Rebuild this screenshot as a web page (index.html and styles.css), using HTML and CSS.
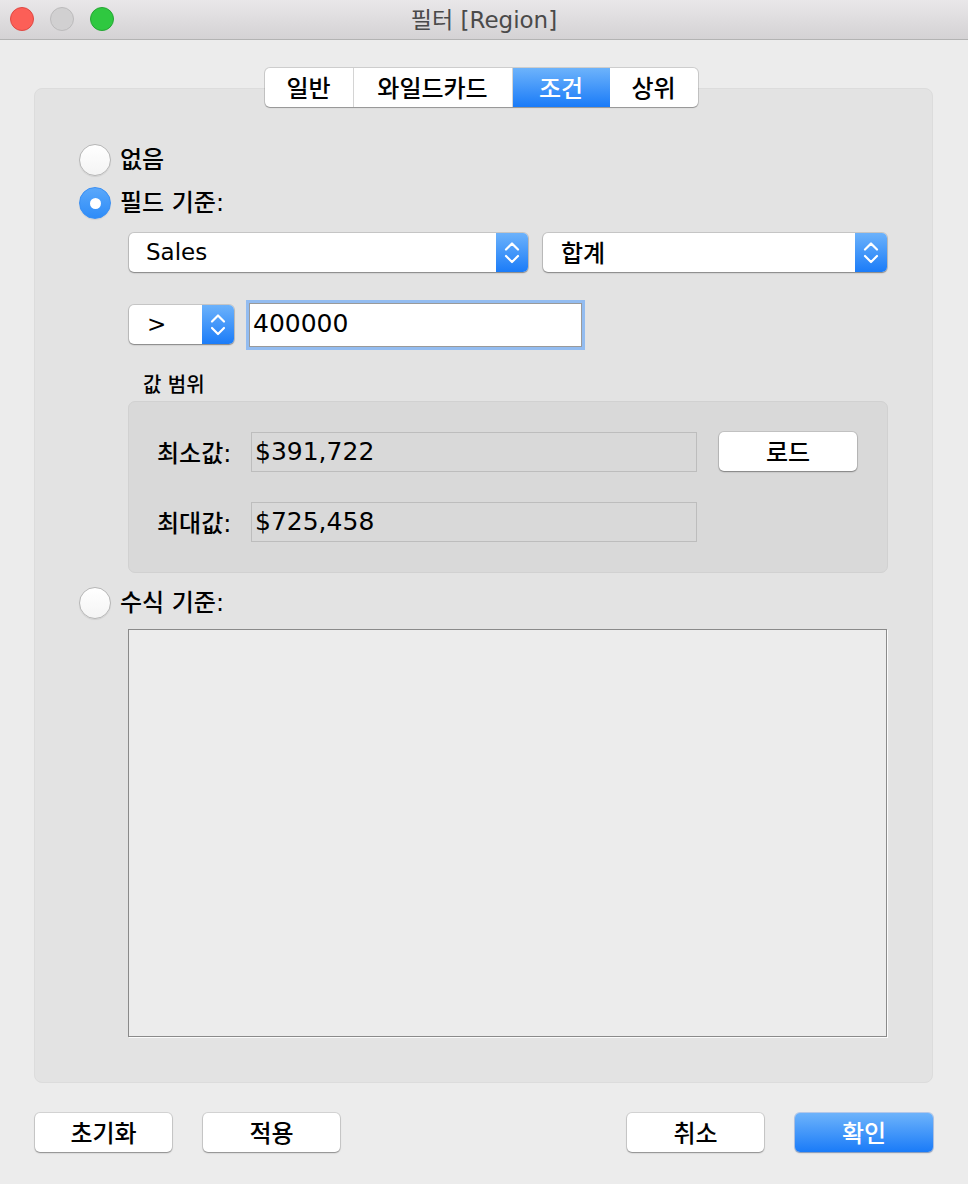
FILE: index.html
```html
<!DOCTYPE html>
<html lang="ko">
<head>
<meta charset="utf-8">
<title>필터 [Region]</title>
<link rel="stylesheet" href="styles.css">
</head>
<body>
<div class="window">
  <div class="titlebar">
    <div class="lights">
      <span class="light red"></span>
      <span class="light grey"></span>
      <span class="light green"></span>
    </div>
    <div class="title">필터 [Region]</div>
    <div></div>
  </div>

  <div class="content">
    <div class="tabs">
      <div class="tab t1">일반</div>
      <div class="tab t2">와일드카드</div>
      <div class="tab t3 active">조건</div>
      <div class="tab t4">상위</div>
    </div>

    <div class="panel">
      <div class="radio-row">
        <span class="radio"></span>
        <span class="radio-label">없음</span>
      </div>
      <div class="radio-row r2">
        <span class="radio checked"></span>
        <span class="radio-label">필드 기준:</span>
      </div>

      <div class="field-block">
        <div class="select-row">
          <div class="select sel-field">
            <span class="sel-text latin">Sales</span>
            <span class="sel-arrow"><svg width="32" height="39" viewBox="0 0 32 39"><path d="M10 16.5 L16 10.5 L22 16.5 M10 23 L16 29 L22 23" fill="none" stroke="#fff" stroke-width="2.2" stroke-linecap="round" stroke-linejoin="round"/></svg></span>
          </div>
          <div class="select sel-agg">
            <span class="sel-text">합계</span>
            <span class="sel-arrow"><svg width="32" height="39" viewBox="0 0 32 39"><path d="M10 16.5 L16 10.5 L22 16.5 M10 23 L16 29 L22 23" fill="none" stroke="#fff" stroke-width="2.2" stroke-linecap="round" stroke-linejoin="round"/></svg></span>
          </div>
        </div>

        <div class="op-row">
          <div class="select sel-op">
            <span class="sel-text latin">&gt;</span>
            <span class="sel-arrow"><svg width="32" height="39" viewBox="0 0 32 39"><path d="M10 16.5 L16 10.5 L22 16.5 M10 23 L16 29 L22 23" fill="none" stroke="#fff" stroke-width="2.2" stroke-linecap="round" stroke-linejoin="round"/></svg></span>
          </div>
          <div class="value-input">400000</div>
        </div>

        <div class="range-label">값 범위</div>
        <div class="range-box">
          <div class="range-row">
            <span class="range-name">최소값:</span>
            <span class="range-field">$391,722</span>
            <span class="btn load">로드</span>
          </div>
          <div class="range-row r-second">
            <span class="range-name">최대값:</span>
            <span class="range-field">$725,458</span>
          </div>
        </div>
      </div>

      <div class="radio-row r3">
        <span class="radio"></span>
        <span class="radio-label">수식 기준:</span>
      </div>
      <div class="formula"></div>
    </div>

    <div class="footer">
      <div class="btn foot">초기화</div>
      <div class="btn foot">적용</div>
      <div class="spacer"></div>
      <div class="btn foot">취소</div>
      <div class="btn foot primary">확인</div>
    </div>
  </div>
</div>
</body>
</html>
```

FILE: styles.css
```css
* { box-sizing: border-box; }

html, body {
  margin: 0;
  padding: 0;
}

body {
  background: #ececec;
  font-family: "DejaVu Sans", "Noto Sans CJK KR", sans-serif;
  font-size: 24px;
  font-weight: 500;
  color: #000;
}

.window {
  width: 968px;
  height: 1184px;
  display: flex;
  flex-direction: column;
  overflow: hidden;
}

/* Title bar */
.titlebar {
  height: 40px;
  flex: none;
  display: grid;
  grid-template-columns: 1fr auto 1fr;
  align-items: center;
  background: linear-gradient(#e9e7e9, #d4d2d4);
  border-bottom: 1px solid #b3b3b3;
}

.lights {
  display: flex;
  gap: 16px;
  padding-left: 10px;
  padding-bottom: 1px;
}

.light {
  width: 24px;
  height: 24px;
  border-radius: 50%;
  display: block;
}

.light.red { background: #fc5f57; border: 1px solid #df4843; }
.light.grey { background: #d1d0d1; border: 1px solid #bcbbbc; }
.light.green { background: #2fc840; border: 1px solid #25a634; }

.title {
  color: #4a4a4a;
  font-size: 23px;
  font-weight: 400;
  line-height: 26px;
  padding-top: 1px;
}

/* Content */
.content {
  flex: 1;
  display: flex;
  flex-direction: column;
  padding: 28px 35px 0 34px;
}

.tabs {
  align-self: center;
  display: flex;
  height: 39px;
  margin-bottom: -19px;
  margin-left: -5px;
  position: relative;
  z-index: 1;
  background: #fff;
  border-radius: 5px;
  box-shadow: 0 0 0 1px rgba(0,0,0,0.13), 0 1px 1px rgba(0,0,0,0.25);
  overflow: hidden;
}

.tab {
  display: flex;
  align-items: center;
  justify-content: center;
  font-size: 24px;
  border-right: 1px solid #d4d4d4;
  padding-bottom: 2px;
}

.tab:last-child { border-right: none; }
.tab.t1 { width: 89px; }
.tab.t2 { width: 159px; }
.tab.t3 { width: 97px; }
.tab.t4 { width: 88px; }

.tab.active {
  background: linear-gradient(#6db3fb, #1a7bf8);
  color: #fff;
  border-right: none;
}

.panel {
  height: 995px;
  background: #e3e3e3;
  border: 1px solid #dcdcdc;
  border-radius: 8px;
  padding: 55px 0 0 44px;
  display: flex;
  flex-direction: column;
}

/* Radios */
.radio-row {
  display: flex;
  align-items: center;
  height: 32px;
  gap: 9px;
}

.radio-row.r2 { margin-top: 11px; }
.radio-row.r3 { margin-top: 14px; }

.radio {
  width: 32px;
  height: 32px;
  border-radius: 50%;
  background: linear-gradient(#ffffff, #f4f4f4);
  border: 1px solid #b6b6b6;
  box-shadow: 0 1px 1px rgba(0,0,0,0.08);
  display: flex;
  align-items: center;
  justify-content: center;
  flex: none;
}

.radio.checked {
  background: linear-gradient(#5aa8fb, #2e8cf8);
  border: 1px solid #3a8ff3;
}

.radio.checked::after {
  content: "";
  width: 11px;
  height: 11px;
  border-radius: 50%;
  background: #fff;
}

.radio-label {
  font-size: 24px;
  line-height: 32px;
  padding-bottom: 1px;
}

/* Field block */
.field-block {
  margin-left: 50px;
  margin-top: 14px;
  display: flex;
  flex-direction: column;
}

.select-row {
  display: flex;
  gap: 15px;
}

.select {
  height: 39px;
  background: #fff;
  border-radius: 5px;
  box-shadow: 0 0 0 1px rgba(0,0,0,0.12), 0 1px 1.5px rgba(0,0,0,0.35);
  display: flex;
  align-items: center;
  justify-content: space-between;
  overflow: hidden;
}

.sel-field { width: 399px; }
.sel-agg { width: 344px; }
.sel-op { width: 105px; margin-top: 5px; }

.sel-text {
  padding-left: 18px;
  font-size: 24px;
  padding-bottom: 2px;
}

.sel-text.latin {
  font-size: 23px;
  font-weight: 400;
  padding-left: 17px;
}

.sel-op .sel-text.latin { padding-left: 18px; }

.sel-arrow {
  width: 32px;
  height: 100%;
  background: linear-gradient(#6cb2fb, #1b7cf8);
  display: flex;
  align-items: center;
  justify-content: center;
  flex: none;
}

.sel-arrow svg { display: block; }

.op-row {
  display: flex;
  align-items: flex-start;
  margin-top: 28px;
}

.value-input {
  width: 333px;
  height: 44px;
  margin: 3px 0 3px 15px;
  background: #fff;
  border: 1px solid #9a9a9a;
  box-shadow: 0 0 0 3px #93bcf0;
  font-size: 25px;
  font-weight: 400;
  line-height: 40px;
  padding-left: 3px;
}

.range-label {
  margin: 23px 0 0 14px;
  font-size: 20px;
  line-height: 25px;
}

.range-box {
  margin: 3px 0 0 -1px;
  width: 760px;
  height: 172px;
  background: #d9d9d9;
  border: 1px solid #d1d1d1;
  border-radius: 7px;
  padding: 30px 0 0 28px;
  display: flex;
  flex-direction: column;
}

.range-row {
  display: flex;
  align-items: center;
  height: 40px;
}

.range-row.r-second { margin-top: 30px; }

.range-name {
  width: 94px;
  font-size: 24px;
  padding-bottom: 2px;
}

.range-field {
  width: 446px;
  height: 40px;
  border: 1px solid #bdbdbd;
  background: #d9d9d9;
  font-size: 25px;
  font-weight: 400;
  line-height: 38px;
  padding-left: 3px;
}

.btn {
  height: 39px;
  background: #fff;
  border-radius: 5px;
  box-shadow: 0 0 0 1px rgba(0,0,0,0.1), 0 1px 1.5px rgba(0,0,0,0.35);
  display: flex;
  align-items: center;
  justify-content: center;
  font-size: 24px;
  padding-bottom: 3px;
}

.btn.load {
  width: 138px;
  margin-left: 22px;
  margin-top: -1px;
}

/* Formula */
.formula {
  margin: 10px 0 0 49px;
  width: 759px;
  height: 408px;
  background: #ececec;
  border: 1px solid #8a8a8a;
  box-shadow: 1px 1px 0 #fbfbfb;
}

/* Footer */
.footer {
  display: flex;
  margin-top: 30px;
  padding-left: 1px;
}

.btn.foot { width: 137px; }
.btn.foot + .btn.foot { margin-left: 31px; }
.spacer { flex: 1; }

.btn.primary {
  width: 138px;
  background: linear-gradient(#6db3fb, #1a7bf8);
  color: #fff;
  box-shadow: 0 0 0 1px rgba(20,100,230,0.25), 0 1px 1.5px rgba(0,0,0,0.3);
}
```
